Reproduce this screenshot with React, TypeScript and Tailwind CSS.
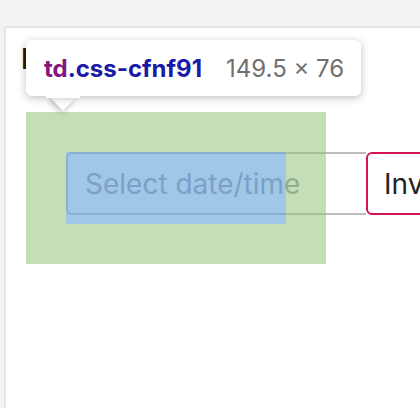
import React from "react";

export default function App() {
  return (
    <div
      className="relative w-[420px] h-[408px] overflow-hidden bg-[#f2f3f2]"
      style={{ fontFamily: "Inter, 'Liberation Sans', sans-serif" }}
    >
      <div className="ml-[4px] mt-[26px] h-[400px] w-[430px] rounded-tl-[3px] border-l-2 border-t-2 border-[#e4e5e4] bg-white">
        <div className="pl-[15px] pt-[16px] text-[28px] leading-[30px] font-semibold text-[#1f1f1f] whitespace-nowrap">
          Date
        </div>
        <div className="mt-[78px] flex pl-[60px] whitespace-nowrap">
          <div className="flex h-[63px] w-[300px] shrink-0 items-center rounded-l-[6px] border-2 border-r-0 border-[#bcbcbc] pl-[17px] text-[28px] text-[#939393]">
            Select date/time
          </div>
          <div className="flex h-[63px] w-[200px] shrink-0 items-center rounded-[6px] border-2 border-[#d3125a] pl-[16px] text-[28px] text-[#222]">
            Invalid date
          </div>
        </div>
      </div>

      {/* highlight overlay */}
      <div className="absolute left-[26px] top-[112px] h-[152px] w-[300px] border-[40px] border-[rgba(147,196,125,0.55)] bg-[rgba(111,168,220,0.66)] bg-clip-padding" />

      {/* tooltip arrow */}
      <div className="absolute left-[54px] top-[89px] h-[18px] w-[18px] rotate-45 bg-white shadow-[0_2px_6px_rgba(0,0,0,0.3)]" />
      {/* tooltip */}
      <div className="absolute left-[26px] top-[40px] flex h-[56px] w-[335px] items-center rounded-[6px] bg-white pl-[18px] pt-[2px] shadow-[0_2px_8px_rgba(0,0,0,0.25)] whitespace-nowrap">
        <span className="text-[24px] font-bold text-[#881280]">td</span>
        <span className="text-[24px] font-bold text-[#1a1aa6]">.css-cfnf91</span>
        <span className="ml-[24px] text-[24px] text-[#707070]">149.5 × 76</span>
      </div>
      <div className="absolute left-[46px] top-[86px] h-[12px] w-[34px] bg-white" />
    </div>
  );
}
